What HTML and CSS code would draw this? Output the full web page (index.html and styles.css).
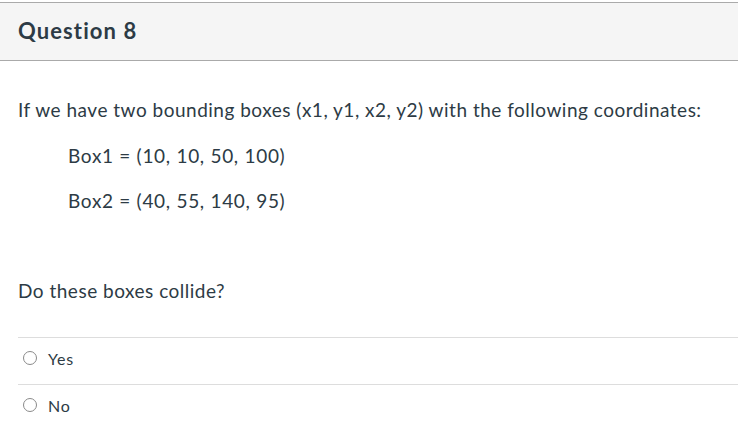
FILE: index.html
```html
<!DOCTYPE html>
<html>
<head>
<meta charset="utf-8">
<link rel="stylesheet" href="styles.css">
</head>
<body>
<div class="question">
  <div class="header"><h2 class="title">Question 8</h2></div>
  <div class="content">
    <p class="text">If we have two bounding boxes (x1, y1, x2, y2) with the following coordinates:</p>
    <p class="box box-first">Box1 = (10, 10, 50, 100)</p>
    <p class="box">Box2 = (40, 55, 140, 95)</p>
    <p class="ask">Do these boxes collide?</p>
    <div class="answers">
      <label class="answer"><span class="radio"></span><span class="label">Yes</span></label>
      <label class="answer"><span class="radio"></span><span class="label">No</span></label>
    </div>
  </div>
</div>
</body>
</html>
```
FILE: styles.css
```css
html, body { margin: 0; padding: 0; background: #fff; }
body { font-family: Lato, "Open Sans", sans-serif; color: #2d3b45; }
.question { padding-top: 2px; }
.header {
  background: #f5f5f5;
  border-top: 1px solid #aaaaaa;
  border-bottom: 1px solid #aaaaaa;
  height: 57px;
  box-sizing: content-box;
  display: flex;
  align-items: center;
  padding-left: 18px;
}
.title { margin: 0 0 3px 0; font-size: 22px; font-weight: 700; letter-spacing: 1.1px; }
.content { padding: 0 0 0 18px; }
.text, .box, .ask { margin: 0; font-size: 19px; line-height: 24px; letter-spacing: 0.5px; }
.text { padding-top: 37px; }
.box { padding-left: 50px; margin-top: 21px; letter-spacing: 0.7px; }
.box-first { margin-top: 22px; }
.ask { margin-top: 66px; }
.answers { margin-top: 34px; }
.answer {
  display: flex; align-items: center;
  box-sizing: border-box;
  border-top: 1px solid #dddddd;
  height: 47px;
  padding-bottom: 6px;
  font-size: 16px;
  letter-spacing: 0.8px;
}
.radio {
  width: 14px; height: 14px; border: 1px solid #8a8a8a; border-radius: 50%;
  box-sizing: border-box; margin-left: 5px; margin-right: 11px;
}
```
